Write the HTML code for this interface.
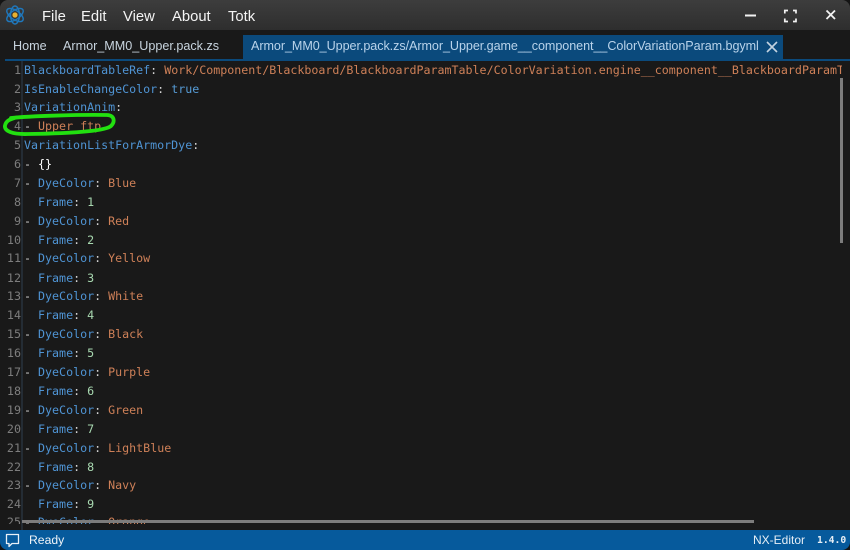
<!DOCTYPE html>
<html><head><meta charset="utf-8">
<style>
*{box-sizing:border-box}
html,body{margin:0;padding:0;width:850px;height:550px;overflow:hidden;background:#141414}
body{position:relative;font-family:"Liberation Sans",sans-serif}
.abs{position:absolute}
#title{left:0;top:0;width:850px;height:30px;background:linear-gradient(#3d3d3d,#2e2e2e);border-radius:8px 8px 0 0}
#main{left:0;top:30px;width:850px;height:500px;background:#191919}
.menu{position:absolute;top:7.5px;color:#f4f4f4;font-size:14.8px;line-height:18px}
.tab{position:absolute;top:38px;color:#c8d4de;font-size:12.6px;line-height:16px;white-space:nowrap}
#active{left:243px;top:35px;width:540px;height:24px;background:#0b4a7c}
#tabline{left:5px;top:59px;width:845px;height:2px;background:#0b4a7c}
#gutter{left:21px;top:61px;width:2px;height:469px;background:#242c34}
.ln{position:absolute;left:0;width:21px;text-align:right;color:#7d7d7d;font:11.7px/19px "DejaVu Sans Mono","Liberation Mono",monospace}
.c{position:absolute;left:24px;white-space:pre;color:#d4d4d4;font:11.65px/19px "DejaVu Sans Mono","Liberation Mono",monospace}
.k{color:#4f94d4}.s{color:#ce8058}.n{color:#a8d8b0}.b{color:#569cd6}.w{color:#fff}
#clip{left:0;top:61px;width:842px;height:463px;overflow:hidden}
#status{left:0;top:530px;width:850px;height:20px;background:#065a9c;border-radius:0 0 8px 8px}
</style></head><body>
<div class="abs" id="title"></div>
<div class="abs" id="main"></div>
<svg class="abs" style="left:4px;top:3px" width="24" height="24" viewBox="0 0 24 24" fill="none">
<g stroke="#1f78bd" stroke-width="1.4"><ellipse cx="11" cy="12" rx="9.5" ry="4.5" transform="rotate(35 11 12)"/><ellipse cx="11" cy="12" rx="9.5" ry="4.5" transform="rotate(-35 11 12)"/><ellipse cx="11" cy="12" rx="4.5" ry="9" /></g>
<circle cx="11" cy="12" r="2.6" fill="#e8b030"/></svg>
<div class="menu" style="left:42px">File</div>
<div class="menu" style="left:81px">Edit</div>
<div class="menu" style="left:123px">View</div>
<div class="menu" style="left:172px">About</div>
<div class="menu" style="left:228px">Totk</div>
<svg class="abs" style="left:740px;top:5px" width="110" height="20" fill="none" stroke="#f2f2f2">
<path d="M5 10.5H16" stroke-width="2"/>
<path d="M44.8 8.5V5.5H48M53 5.5H56V8.5M56 13.5V16.5H53M48 16.5H44.8V13.5" stroke-width="1.7"/>
<path d="M86.5 5.500L95 14M95 5.500L86.500 14" stroke-width="1.8"/></svg>
<div class="abs" id="active"></div>
<div class="abs" id="tabline"></div>
<div class="tab" style="left:13px">Home</div>
<div class="tab" style="left:63px">Armor_MM0_Upper.pack.zs</div>
<div class="tab" style="left:251px;color:#b9d3ea;letter-spacing:-0.065px">Armor_MM0_Upper.pack.zs/Armor_Upper.game__component__ColorVariationParam.bgyml</div>
<svg class="abs" style="left:765px;top:40px" width="14" height="14" fill="none" stroke="#c3d3e0" stroke-width="1.6"><path d="M2 2L12 12M12 2L2 12"/></svg>
<div class="abs" id="gutter"></div>
<div class="abs" id="clip">
<div class="ln" style="top:0px">1</div><div class="c" style="top:0px"><span class="k">BlackboardTableRef</span>: <span class="s">Work/Component/Blackboard/BlackboardParamTable/ColorVariation.engine__component__BlackboardParamT</span></div>
<div class="ln" style="top:19px">2</div><div class="c" style="top:19px"><span class="k">IsEnableChangeColor</span>: <span class="b">true</span></div>
<div class="ln" style="top:37px">3</div><div class="c" style="top:37px"><span class="k">VariationAnim</span>:</div>
<div class="ln" style="top:56px">4</div><div class="c" style="top:56px">- <span class="s">Upper_ftp</span></div>
<div class="ln" style="top:75px">5</div><div class="c" style="top:75px"><span class="k">VariationListForArmorDye</span>:</div>
<div class="ln" style="top:94px">6</div><div class="c" style="top:94px">- <span class="w">{}</span></div>
<div class="ln" style="top:113px">7</div><div class="c" style="top:113px">- <span class="k">DyeColor</span>: <span class="s">Blue</span></div>
<div class="ln" style="top:132px">8</div><div class="c" style="top:132px">  <span class="k">Frame</span>: <span class="n">1</span></div>
<div class="ln" style="top:151px">9</div><div class="c" style="top:151px">- <span class="k">DyeColor</span>: <span class="s">Red</span></div>
<div class="ln" style="top:170px">10</div><div class="c" style="top:170px">  <span class="k">Frame</span>: <span class="n">2</span></div>
<div class="ln" style="top:188px">11</div><div class="c" style="top:188px">- <span class="k">DyeColor</span>: <span class="s">Yellow</span></div>
<div class="ln" style="top:208px">12</div><div class="c" style="top:208px">  <span class="k">Frame</span>: <span class="n">3</span></div>
<div class="ln" style="top:226px">13</div><div class="c" style="top:226px">- <span class="k">DyeColor</span>: <span class="s">White</span></div>
<div class="ln" style="top:245px">14</div><div class="c" style="top:245px">  <span class="k">Frame</span>: <span class="n">4</span></div>
<div class="ln" style="top:264px">15</div><div class="c" style="top:264px">- <span class="k">DyeColor</span>: <span class="s">Black</span></div>
<div class="ln" style="top:283px">16</div><div class="c" style="top:283px">  <span class="k">Frame</span>: <span class="n">5</span></div>
<div class="ln" style="top:302px">17</div><div class="c" style="top:302px">- <span class="k">DyeColor</span>: <span class="s">Purple</span></div>
<div class="ln" style="top:321px">18</div><div class="c" style="top:321px">  <span class="k">Frame</span>: <span class="n">6</span></div>
<div class="ln" style="top:340px">19</div><div class="c" style="top:340px">- <span class="k">DyeColor</span>: <span class="s">Green</span></div>
<div class="ln" style="top:359px">20</div><div class="c" style="top:359px">  <span class="k">Frame</span>: <span class="n">7</span></div>
<div class="ln" style="top:378px">21</div><div class="c" style="top:378px">- <span class="k">DyeColor</span>: <span class="s">LightBlue</span></div>
<div class="ln" style="top:397px">22</div><div class="c" style="top:397px">  <span class="k">Frame</span>: <span class="n">8</span></div>
<div class="ln" style="top:415px">23</div><div class="c" style="top:415px">- <span class="k">DyeColor</span>: <span class="s">Navy</span></div>
<div class="ln" style="top:434px">24</div><div class="c" style="top:434px">  <span class="k">Frame</span>: <span class="n">9</span></div>
<div class="ln" style="top:452px">25</div><div class="c" style="top:452px">- <span class="k">DyeColor</span>: <span class="s">Orange</span></div>
</div>
<div class="abs" style="left:22px;top:520px;width:732px;height:2.5px;background:#7c7c7c"></div>
<div class="abs" style="left:840px;top:78px;width:3px;height:165px;background:#7c7c7c"></div>
<svg class="abs" style="left:0;top:105px" width="125" height="35" fill="none"><path d="M11 13C30 11 80 9.500 107 10C115 10.500 115 17 111 21C104 27 60 28.500 28 29C12 29.500 4 26 5 20.500C6 16 9 14.500 16 12.500" stroke="#22e010" stroke-width="3.8" stroke-linecap="round"/></svg>
<div class="abs" id="status"></div>
<svg class="abs" style="left:4px;top:533px" width="16" height="16" fill="none" stroke="#e8f0f6" stroke-width="1.3"><path d="M2.500 1.500H14.500V10.500H8L5 13.500V10.500H2.500Z" stroke-linejoin="round"/></svg>
<div class="abs" style="left:29px;top:532px;color:#f0f4f8;font:12.200px/17px 'Liberation Sans',sans-serif">Ready</div>
<div class="abs" style="left:753px;top:532px;color:#e6eef5;font:12px/16px 'Liberation Sans',sans-serif">NX-Editor</div>
<div class="abs" style="left:817px;top:533px;color:#e6eef5;font:bold 9.700px/16px 'DejaVu Sans Mono',monospace">1.4.0</div>
</body></html>
